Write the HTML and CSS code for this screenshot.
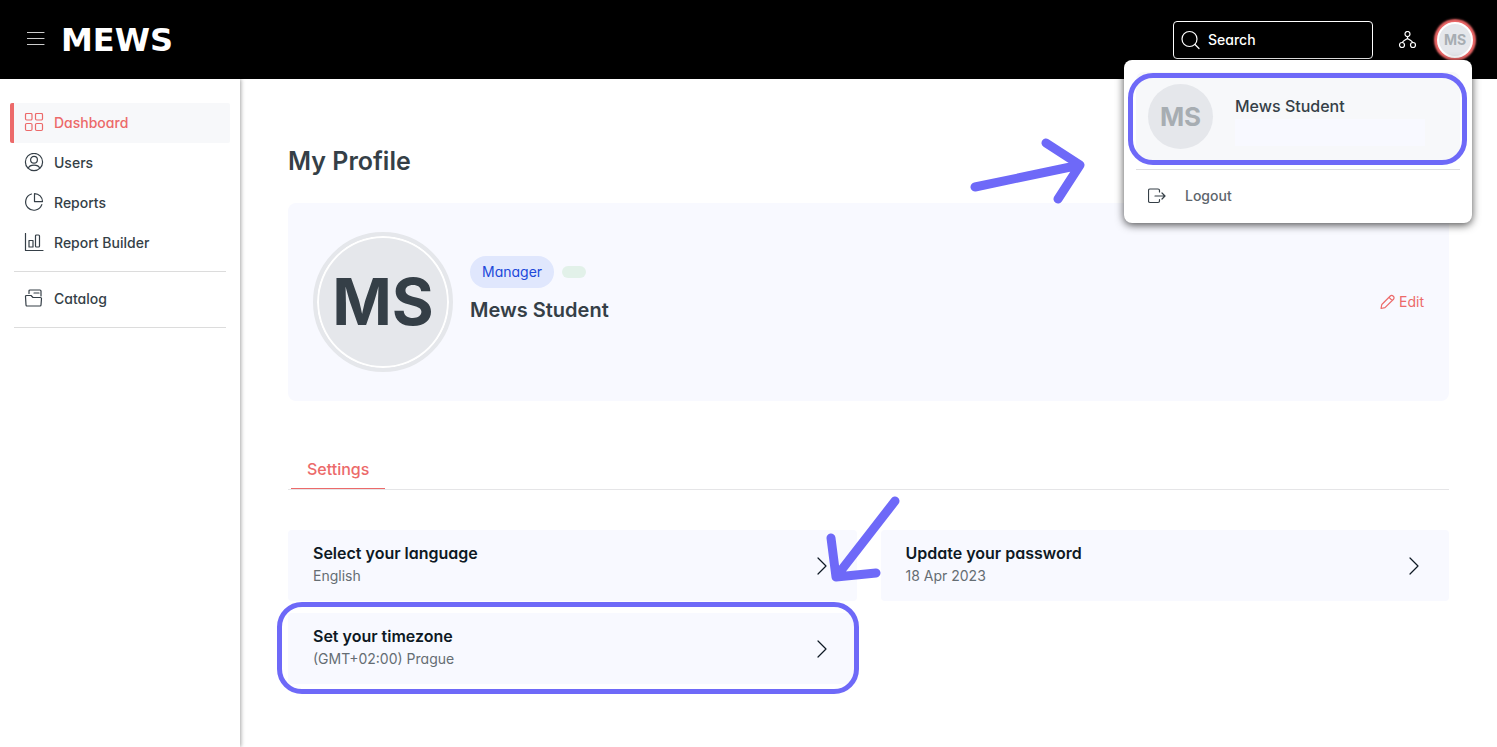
FILE: index.html
```html
<!DOCTYPE html>
<html lang="en">
<head>
    <meta charset="UTF-8">
    <meta name="viewport" content="width=device-width, initial-scale=1.0">
    <title>My Profile</title>
    <link rel="stylesheet" href="styles.css">
</head>
<body>
    <header class="topbar">
        <button class="icon-btn menu-toggle" type="button" aria-label="Toggle menu">
            <svg width="18" height="18" viewBox="0 0 18 18"><path d="M0 1.500h17M0 7.500h17M0 13.500h17"/></svg>
        </button>
        <a class="logo" href="#">MEWS</a>

        <form class="search">
            <svg width="20" height="20" viewBox="0 0 20 20"><circle cx="8.500" cy="9" r="7.500"/><path d="M14 14.500l4 4"/></svg>
            <input type="search" placeholder="Search" aria-label="Search">
        </form>
        <button class="icon-btn org-btn" type="button" aria-label="Organisation">
            <svg width="18" height="18" viewBox="0 0 18 18"><circle cx="8.500" cy="3" r="2.500"/><circle cx="3" cy="14" r="2.500"/><circle cx="14" cy="14" r="2.500"/><path d="M8.500 5.500v2.500M3.500 11.500C3.500 10 5 9.500 8.500 7.500 12 9.500 13.500 10 13.500 11.500"/></svg>
        </button>
        <button class="avatar avatar-small" type="button">MS</button>

        <div class="user-menu">
            <a class="user-menu-profile highlight" href="#">
                <span class="avatar avatar-medium">MS</span>
                <span class="user-menu-info">
                    <span class="user-menu-name">Mews Student</span>
                    <span class="user-menu-email"></span>
                </span>
            </a>
            <a class="user-menu-logout" href="#">
                <svg width="18" height="16" viewBox="0 0 18 16"><path d="M11.500 4V2.500A1.500 1.500 0 0 0 10 1H2A1.500 1.500 0 0 0 .5 2.500v10.500A1.500 1.500 0 0 0 2 14.500h8a1.500 1.500 0 0 0 1.500-1.500v-1.500M7 8h10M14 5l3 3-3 3"/></svg>
                Logout
            </a>
        </div>
    </header>

    <div class="layout">
        <nav class="sidebar">
            <a class="nav-item active" href="#">
                <svg width="20" height="20" viewBox="0 0 20 20"><rect x="1.500" y="0.500" width="6.500" height="6.500" rx="1.200"/><rect x="11.500" y="0.500" width="7" height="6.500" rx="1.200"/><rect x="1.500" y="10.500" width="6.500" height="7" rx="1.200"/><rect x="11.500" y="10.500" width="7" height="7" rx="1.200"/></svg>
                Dashboard
            </a>
            <a class="nav-item" href="#">
                <svg width="20" height="20" viewBox="0 0 20 20"><circle cx="10" cy="9" r="8.600"/><circle cx="10" cy="6.800" r="3.400"/><path d="M4.300 15.200c.8-2.300 2.700-3 5.700-3s4.900.7 5.700 3"/></svg>
                Users
            </a>
            <a class="nav-item" href="#">
                <svg width="20" height="20" viewBox="0 0 20 20"><path d="M7.500 1A8.300 8.300 0 1 0 17.800 11.600"/><path d="M10.500.6v8h8a8 8 0 0 0-8-8z"/></svg>
                Reports
            </a>
            <a class="nav-item" href="#">
                <svg width="20" height="20" viewBox="0 0 20 20"><path d="M1.500.5v17H19"/><rect x="5" y="7.500" width="4" height="6.500"/><rect x="11.500" y="2" width="4" height="12" rx="1"/></svg>
                Report Builder
            </a>
            <hr>
            <a class="nav-item" href="#">
                <svg width="20" height="20" viewBox="0 0 20 20"><path d="M5 4.500v-2.500a1 1 0 0 1 1-1h10a1 1 0 0 1 1 1V7M10 4h5"/><path d="M1.500 7.500a1 1 0 0 1 1-1h4.500l2 2h7.500a1 1 0 0 1 1 1l-.5 6.500a1 1 0 0 1-1 1H3a1 1 0 0 1-1-1z"/></svg>
                Catalog
            </a>
            <hr>
        </nav>

        <main class="content">
            <h1>My Profile</h1>

            <section class="profile-card">
                <div class="avatar avatar-large">MS</div>
                <div class="profile-info">
                    <div class="badges">
                        <span class="badge">Manager</span>
                        <span class="badge-empty"></span>
                    </div>
                    <h2>Mews Student</h2>
                </div>
                <button class="edit-btn" type="button">
                    <svg width="16" height="16" viewBox="0 0 16 16"><path d="M1 14.500l.8-4L10.300 2a1.900 1.900 0 0 1 2.700 0l.5.5a1.900 1.900 0 0 1 0 2.700L5 13.700zM9 3.300l3.200 3.200"/></svg>
                    Edit
                </button>
            </section>

            <div class="tabs">
                <button class="tab" type="button">Settings</button>
            </div>

            <div class="settings-grid">
                <a class="setting" href="#">
                    <span class="setting-text">
                        <span class="setting-title">Select your language</span>
                        <span class="setting-value">English</span>
                    </span>
                    <svg width="12" height="18" viewBox="0 0 12 18"><path d="M2 1l8 8-8 8"/></svg>
                </a>
                <a class="setting" href="#">
                    <span class="setting-text">
                        <span class="setting-title">Update your password</span>
                        <span class="setting-value">18 Apr 2023</span>
                    </span>
                    <svg width="12" height="18" viewBox="0 0 12 18"><path d="M2 1l8 8-8 8"/></svg>
                </a>
                <a class="setting highlight" href="#">
                    <span class="setting-text">
                        <span class="setting-title">Set your timezone</span>
                        <span class="setting-value">(GMT+02:00) Prague</span>
                    </span>
                    <svg width="12" height="18" viewBox="0 0 12 18"><path d="M2 1l8 8-8 8"/></svg>
                </a>
                <svg class="arrow arrow-setting" width="60" height="90" viewBox="0 0 60 90"><path d="M70 5L11 81M6 42l5 39 40-4"/></svg>
            </div>
        </main>
    </div>

    <svg class="arrow arrow-menu" width="120" height="70" viewBox="0 0 120 70"><path d="M8 51L113 29M79 7l34 22-22 34"/></svg>
</body>
</html>
```
FILE: styles.css
```css
* {
    box-sizing: border-box;
}
body {
    position: relative;
    display: flex;
    flex-direction: column;
    min-height: 100vh;
    margin: 0;
    background-color: #fff;
    color: #353f47;
    font-family: Inter, "Liberation Sans", sans-serif;
    font-size: 14px;
    font-weight: 500;
    line-height: 20px;
    font-feature-settings: "cv11";
}
a {
    color: inherit;
    text-decoration: none;
}
button, input {
    font: inherit;
    font-feature-settings: inherit;
}
button {
    padding: 0;
    border: none;
    background: none;
    color: inherit;
    cursor: pointer;
}
svg {
    flex: none;
    fill: none;
    stroke: currentColor;
    stroke-width: 1.2;
    stroke-linecap: round;
    stroke-linejoin: round;
}
hr {
    width: 212px;
    margin: 8px auto 7px;
    border: none;
    border-top: 1px solid #dcdcdc;
}

/* Top bar */
.topbar {
    position: relative;
    z-index: 2;
    display: flex;
    align-items: center;
    height: 79px;
    padding: 0 24px 0 27px;
    background-color: #000;
    color: #fff;
}
.icon-btn {
    display: flex;
}
.menu-toggle {
    color: #ccc;
}
.logo {
    margin-left: 16px;
    font-family: "DejaVu Sans", sans-serif;
    font-size: 32px;
    font-weight: 700;
    line-height: 40px;
}
.search {
    position: relative;
    width: 200px;
    margin-left: auto;
}
.search svg {
    position: absolute;
    top: 9px;
    left: 8px;
}
.search input {
    display: block;
    width: 100%;
    height: 38px;
    padding: 0 12px 0 34px;
    border: 1px solid #fff;
    border-radius: 4px;
    background: #000;
    color: #fff;
}
.search input::placeholder {
    color: #fff;
    opacity: 1;
}
.org-btn {
    margin: 0 20px 0 26px;
}

.avatar {
    display: flex;
    flex: none;
    align-items: center;
    justify-content: center;
    border-radius: 50%;
    background-color: #e5e7eb;
    color: #a7adb2;
    font-weight: 700;
}
.avatar-small {
    width: 36px;
    height: 36px;
    border: 2px solid #fff;
    box-shadow: 0 0 2px 3px #ec6767;
}
.avatar-medium {
    width: 65px;
    height: 65px;
    font-size: 26px;
}
.avatar-large {
    width: 140px;
    height: 140px;
    border: 4px solid #e5e7eb;
    box-shadow: inset 0 0 0 2px #fff;
    color: #353f47;
    font-size: 64px;
}

.user-menu {
    position: absolute;
    top: 60px;
    right: 25px;
    width: 348px;
    padding: 12px;
    border-radius: 8px;
    background-color: #fff;
    box-shadow: 0 2px 8px rgba(0, 0, 0, 0.7);
    color: #353f47;
}
.user-menu-profile {
    display: flex;
    gap: 22px;
    padding: 12px;
    border-radius: 8px;
    background-color: #f7f8fa;
}
.user-menu-info {
    display: flex;
    flex-direction: column;
    gap: 3px;
    padding-top: 12px;
}
.user-menu-name {
    font-size: 16px;
}
.user-menu-email {
    width: 190px;
    height: 27px;
    background-color: #f8f9ff;
}
.user-menu-logout {
    display: flex;
    align-items: center;
    gap: 19px;
    margin-top: 8px;
    padding: 16px 0 5px 12px;
    border-top: 1px solid #dfdfe1;
    color: #5d656c;
}
.user-menu-logout svg {
    color: #353f47;
}

/* Sidebar */
.layout {
    display: flex;
    flex: 1;
}
.sidebar {
    flex: none;
    width: 240px;
    padding: 24px 10px 0;
    box-shadow: 1px 0 4px rgba(0, 0, 0, 0.35);
}
.nav-item {
    display: flex;
    align-items: center;
    gap: 10px;
    height: 40px;
    padding-left: 10px;
    border-left: 4px solid transparent;
    border-radius: 2px;
}
.nav-item.active {
    border-left-color: #ec6a6a;
    background-color: #f7f8fa;
    color: #ec6a6a;
}

/* Profile */
.content {
    flex: 1;
    padding: 66px 48px 48px;
}
h1 {
    margin: 0 0 26px;
    font-size: 25px;
    font-weight: 600;
    line-height: 32px;
}
.profile-card {
    display: flex;
    align-items: center;
    gap: 17px;
    padding: 29px 25px;
    border-radius: 8px;
    background-color: #f8f9ff;
}
.badges {
    display: flex;
    align-items: center;
    gap: 8px;
}
.badge {
    padding: 6px 12px;
    border-radius: 16px;
    background-color: #e0e7fd;
    color: #2149da;
    font-weight: 400;
}
.badge-empty {
    width: 24px;
    height: 12px;
    border-radius: 6px;
    background-color: #e2f1e9;
}
.profile-info {
    padding-bottom: 24px;
}
h2 {
    margin: 8px 0 0;
    font-size: 20px;
    font-weight: 600;
    line-height: 28px;
}
.edit-btn {
    display: flex;
    align-items: center;
    gap: 3px;
    margin-left: auto;
    color: #ec6a6a;
    font-weight: 400;
}

/* Settings */
.tabs {
    margin-top: 48px;
    padding-left: 3px;
    border-bottom: 1px solid #e5e5e7;
}
.tab {
    display: block;
    padding: 10px 16px 9px;
    border-bottom: 1px solid #ec6a6a;
    color: #ec6a6a;
    font-size: 16px;
}
.settings-grid {
    position: relative;
    display: grid;
    grid-template-columns: 1fr 1fr;
    gap: 12px 24px;
    margin-top: 40px;
}
.setting {
    display: flex;
    align-items: center;
    justify-content: space-between;
    padding: 11px 28px 14px 25px;
    border-radius: 4px;
    background-color: #f8f9ff;
    color: #0e1924;
}
.setting-text {
    display: flex;
    flex-direction: column;
}
.setting > svg {
    margin: 3px 1px 0 0;
}
.setting-title {
    font-size: 16px;
    font-weight: 600;
    line-height: 24px;
}
.setting-value {
    color: #656d73;
    font-weight: 400;
    line-height: 22px;
}

/* Callouts */
.highlight {
    position: relative;
}
.highlight::after {
    content: "";
    position: absolute;
    border: 5px solid #6e69f8;
    border-radius: 25px;
}
.user-menu-profile.highlight::after {
    inset: 1px -7px -4px -8px;
}
.setting.highlight::after {
    inset: -11px -2px -10px -11px;
}
.arrow {
    position: absolute;
    overflow: visible;
    color: #6e69f8;
    stroke-width: 9;
}
.arrow-menu {
    top: 136px;
    right: 410px;
}
.arrow-setting {
    top: -34px;
    left: calc(50% - 44px);
}
```
